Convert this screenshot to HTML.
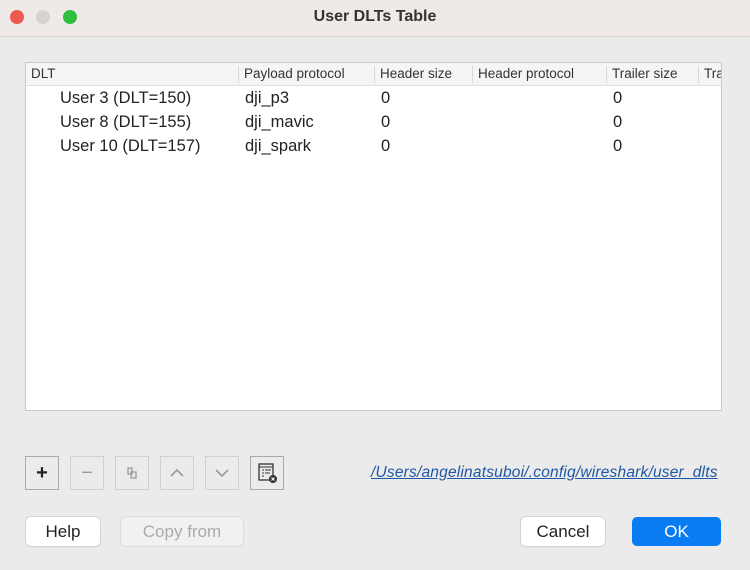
<!DOCTYPE html>
<html><head><style>
*{margin:0;padding:0;box-sizing:border-box}
body{width:750px;height:570px;background:#ebebeb;font-family:"Liberation Sans",sans-serif;position:relative;overflow:hidden}
.tb{position:absolute;left:0;top:0;width:750px;height:37px;background:#efe9e8;border-bottom:1px solid #d6d2d1}
.tb .t{position:absolute;left:0;width:750px;top:8px;text-align:center;font-weight:bold;font-size:16px;color:#333}
.dot{position:absolute;top:10px;width:14px;height:14px;border-radius:50%}
.tab{position:absolute;left:25px;top:62px;width:697px;height:349px;background:#fff;border:1px solid #c9c9c9}
.hd{position:absolute;left:0;top:0;width:695px;height:23px;background:#f5f5f5;border-bottom:1px solid #e0e0e0;font-size:13.5px;color:#333}
.hd span{position:absolute;top:3px;padding-left:5px;border-left:1px solid #d8d8d8;height:17px;white-space:nowrap;overflow:hidden}
.r{position:absolute;font-size:16.5px;color:#222;white-space:nowrap}
.b{position:absolute;top:456px;width:34px;height:34px;border:1px solid #d0d0d0;background:#ebebeb;color:#999;font-size:20px;text-align:center;line-height:32px}
.btn{position:absolute;top:517px;height:29px;border-radius:5px;background:#fff;box-shadow:0 0 0 1px #d4d4d4,0 1px 1px #ccc;font-size:17px;text-align:center;line-height:29px;color:#222}
</style></head><body>
<div class="tb"><div class="dot" style="left:10px;background:#ee5a52"></div><div class="dot" style="left:36px;background:#d7d2d1"></div><div class="dot" style="left:63px;background:#2fbf3c"></div><div class="t">User DLTs Table</div></div>
<div class="tab">
<div class="hd">
<span style="left:0;border:none;width:212px">DLT</span>
<span style="left:212px;width:136px">Payload protocol</span>
<span style="left:348px;width:98px">Header size</span>
<span style="left:446px;width:134px">Header protocol</span>
<span style="left:580px;width:92px">Trailer size</span>
<span style="left:672px;width:23px">Tra</span>
</div>
<div class="r" style="left:34px;top:26px">User 3 (DLT=150)</div><div class="r" style="left:219px;top:26px">dji_p3</div><div class="r" style="left:355px;top:26px">0</div><div class="r" style="left:587px;top:26px">0</div>
<div class="r" style="left:34px;top:50px">User 8 (DLT=155)</div><div class="r" style="left:219px;top:50px">dji_mavic</div><div class="r" style="left:355px;top:50px">0</div><div class="r" style="left:587px;top:50px">0</div>
<div class="r" style="left:34px;top:74px">User 10 (DLT=157)</div><div class="r" style="left:219px;top:74px">dji_spark</div><div class="r" style="left:355px;top:74px">0</div><div class="r" style="left:587px;top:74px">0</div>
</div>
<div class="b" style="left:25px;color:#222;border-color:#aaa;font-weight:bold">+</div>
<div class="b" style="left:70px">−</div>
<div class="b" style="left:115px"><svg width="20" height="20" viewBox="0 0 20 20" style="margin-top:6px"><path d="M6 5h4v6h-4zM9 9h5v6h-5z" stroke="#999" stroke-width="1.3" fill="#ebebeb"/></svg></div>
<div class="b" style="left:160px"><svg width="20" height="20" viewBox="0 0 20 20" style="margin-top:6px"><path d="M4 13 L10 7 L16 13" stroke="#999" stroke-width="1.6" fill="none"/></svg></div>
<div class="b" style="left:205px"><svg width="20" height="20" viewBox="0 0 20 20" style="margin-top:6px"><path d="M4 7 L10 13 L16 7" stroke="#999" stroke-width="1.6" fill="none"/></svg></div>
<div class="b" style="left:250px;border-color:#aaa"><svg width="24" height="24" viewBox="0 0 24 24" style="margin-top:4px"><rect x="4" y="3" width="14" height="16" fill="none" stroke="#333" stroke-width="1.3"/><path d="M4 6h14M7 9h2M10 9h6M7 12h2M10 12h5M7 15h2" stroke="#333" stroke-width="1"/><circle cx="18" cy="18" r="4" fill="#333"/><path d="M16.5 16.5l3 3M19.5 16.5l-3 3" stroke="#fff" stroke-width="1"/></svg></div>
<div style="position:absolute;left:371px;top:464px;font-size:15.5px;letter-spacing:0.2px;font-style:italic;color:#1f57a5;text-decoration:underline">/Users/angelinatsuboi/.config/wireshark/user_dlts</div>
<div class="btn" style="left:26px;width:74px">Help</div>
<div class="btn" style="left:121px;width:122px;background:#f1f1f1;color:#aaa;box-shadow:0 0 0 1px #ddd">Copy from</div>
<div class="btn" style="left:521px;width:84px">Cancel</div>
<div class="btn" style="left:632px;width:89px;background:#0a7cf2;color:#fff;box-shadow:none">OK</div>
</body></html>
